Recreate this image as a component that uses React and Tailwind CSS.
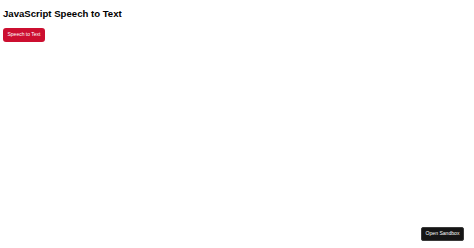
import React from 'react'

const App = () => {
  return (
    <div className="min-h-[248px] bg-white pl-[3px] pt-[8px] font-['Liberation_Sans',Arial,sans-serif]">
      {/* Title */}
      <h1 className="text-[9.6px] leading-[11px] font-bold text-black">
        JavaScript Speech to Text
      </h1>

      <button className="mt-[7px] h-[14px] w-[42px] rounded-[3px] bg-[#cc0f30] text-[5px] leading-none text-white">
        Speech to Text
      </button>

      {/* Sandbox badge */}
      <div className="fixed right-[10px] bottom-[7px] flex h-[14px] w-[43px] items-center justify-center rounded-[2px] border border-[#3a3a3a] bg-[#151515] text-[5.1px] leading-none text-white">
        Open Sandbox
      </div>
    </div>
  )
}

export default App
